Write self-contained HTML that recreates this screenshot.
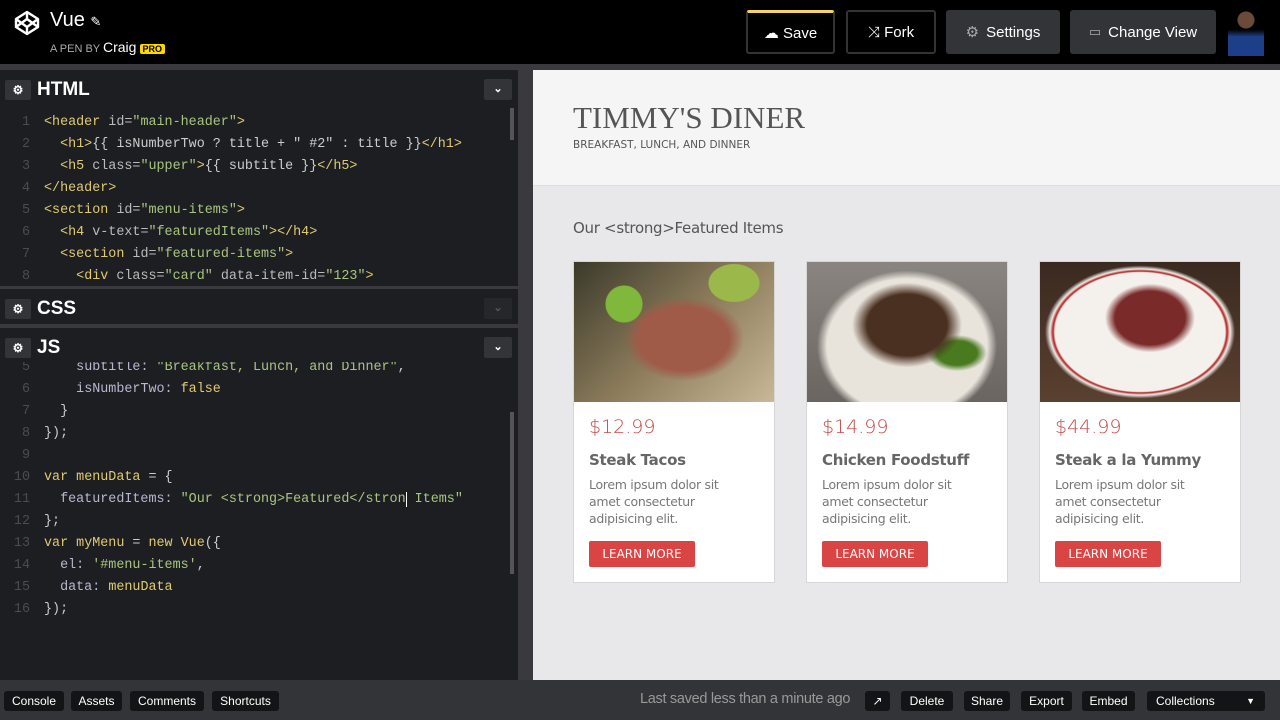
<!DOCTYPE html>
<html><head><meta charset="utf-8"><style>
*{margin:0;padding:0;box-sizing:border-box}
body{width:1280px;height:720px;overflow:hidden;background:#000;font-family:"Liberation Sans",sans-serif;position:relative}
.top{position:absolute;left:0;top:0;width:1280px;height:64px;background:#000}
.strip{position:absolute;left:0;top:64px;width:1280px;height:6px;background:#3a3a3e}
.btn{position:absolute;top:10px;height:44px;border-radius:3px;color:#fff;font-size:15px;display:flex;align-items:center;justify-content:center;gap:7px}
.editor{position:absolute;left:0;top:70px;width:518px;height:610px;background:#1d1e22;overflow:hidden}
.div{position:absolute;left:518px;top:70px;width:15px;height:610px;background:#3a3a3e}
.ph{position:absolute;left:0;width:518px;height:38px;background:#1d1e22;color:#fff;font-weight:bold;font-size:19px}
.ph .g{position:absolute;left:5px;top:10px;width:26px;height:20px;background:#333438;border-radius:2px;color:#fff;font-size:12px;text-align:center;line-height:20px}
.ph .t{position:absolute;left:37px;top:9px}
.ph .c{position:absolute;right:6px;top:9px;width:28px;height:21px;background:#333438;border-radius:2px;color:#fff;font-size:11px;text-align:center;line-height:21px}
.code{position:absolute;left:0;font-family:"Liberation Mono","DejaVu Sans Mono",monospace;font-size:13.4px;color:#ccc}
.code div{height:22px;line-height:22px;white-space:pre}
.ln{display:inline-block;color:#4b4c50;text-align:right;padding-right:14px;width:44px}
.tg{color:#e1ca72}.at{color:#bbb}.st{color:#a8c580}.kw{color:#e1ca72}.pr{color:#b6b8d0}
.bottom{position:absolute;left:0;top:680px;width:1280px;height:40px;background:#333438}
.bb{position:absolute;top:11px;height:20px;background:#131416;color:#fff;font-size:12px;border-radius:3px;line-height:20px;text-align:center}
.prev{position:absolute;left:533px;top:70px;width:747px;height:610px;background:#e8e8ea}
.ph2{position:absolute;left:0;top:0;width:747px;height:116px;background:#f5f5f5;border-bottom:1px solid #ddd}
.card{position:absolute;top:191px;width:202px;height:322px;background:#fff;border:1px solid #d6d6d6;font-family:"DejaVu Sans",sans-serif}
.img{height:140px}
.price{position:absolute;left:15px;top:154px;color:#c24b4b;font-size:19px;font-weight:300}
.nm{position:absolute;left:15px;top:189px;color:#666;font-size:15px;font-weight:bold;letter-spacing:-0.3px}
.ds{position:absolute;left:15px;top:214px;color:#777;font-size:12.5px;line-height:17px;width:160px;letter-spacing:-0.3px}
.lm{position:absolute;left:15px;top:279px;width:106px;height:26px;background:#d94444;color:#fff;font-size:12px;text-align:center;line-height:26px;border-radius:2px}
</style></head><body>
<div class="top">
<svg style="position:absolute;left:14px;top:10px" width="26" height="26" viewBox="0 0 26 26" fill="none" stroke="#fff" stroke-width="2.4" stroke-linejoin="round"><path d="M13 2L24 9V17L13 24L2 17V9Z"/><path d="M13 2V9M13 17V24M2 9L13 17L24 9M2 17L13 9L24 17"/></svg>
<div style="position:absolute;left:50px;top:9px;color:#fff;font-size:20px">Vue <span style="font-size:13px">✎</span></div>
<div style="position:absolute;left:50px;top:39px;color:#aaa;font-size:11px">A PEN BY <span style="color:#fff;font-size:14px">Craig</span> <span style="background:#ffd700;color:#000;font-size:9px;padding:0 3px;border-radius:2px;font-weight:bold">PRO</span></div>
<div class="btn" style="left:746px;width:89px;border:2px solid #333;border-top:3px solid #f4d35e;background:#000">☁ Save</div>
<div class="btn" style="left:846px;width:90px;border:2px solid #333;background:#000">⤨ Fork</div>
<div class="btn" style="left:946px;width:114px;background:#333438"><span style="color:#aaa">⚙</span> Settings</div>
<div class="btn" style="left:1070px;width:146px;background:#333438"><span style="color:#aaa;font-size:13px">▭</span> Change View</div>
<div style="position:absolute;left:1228px;top:8px;width:36px;height:48px;background:radial-gradient(circle at 50% 25%,#6b4a3a 0 8px,transparent 9px),linear-gradient(#000 45%,#1d3f8a 60%);"></div>
</div>
<div class="strip"></div>
<div class="editor">
<div class="ph" style="top:0"><div class="g">⚙</div><div class="t">HTML</div><div class="c">⌄</div></div>
<div class="code" style="top:42px"><div><span class="ln">1</span><span class="tg">&lt;header</span> <span class="at">id=</span><span class="st">"main-header"</span><span class="tg">&gt;</span></div><div><span class="ln">2</span>  <span class="tg">&lt;h1&gt;</span>{{ isNumberTwo ? title + " #2" : title }}<span class="tg">&lt;/h1&gt;</span></div><div><span class="ln">3</span>  <span class="tg">&lt;h5</span> <span class="at">class=</span><span class="st">"upper"</span><span class="tg">&gt;</span>{{ subtitle }}<span class="tg">&lt;/h5&gt;</span></div><div><span class="ln">4</span><span class="tg">&lt;/header&gt;</span></div><div><span class="ln">5</span><span class="tg">&lt;section</span> <span class="at">id=</span><span class="st">"menu-items"</span><span class="tg">&gt;</span></div><div><span class="ln">6</span>  <span class="tg">&lt;h4</span> <span class="at">v-text=</span><span class="st">"featuredItems"</span><span class="tg">&gt;&lt;/h4&gt;</span></div><div><span class="ln">7</span>  <span class="tg">&lt;section</span> <span class="at">id=</span><span class="st">"featured-items"</span><span class="tg">&gt;</span></div><div><span class="ln">8</span>    <span class="tg">&lt;div</span> <span class="at">class=</span><span class="st">"card"</span> <span class="at">data-item-id=</span><span class="st">"123"</span><span class="tg">&gt;</span></div></div>
<div style="position:absolute;left:0;top:216px;width:518px;height:3px;background:#3a3a3e"></div>
<div class="ph" style="top:219px"><div class="g">⚙</div><div class="t">CSS</div><div class="c" style="background:#26272b;color:#555">⌄</div></div>
<div style="position:absolute;left:0;top:254px;width:518px;height:4px;background:#3a3a3e"></div>
<div class="code" style="top:287px"><div><span class="ln">5</span>    <span class="pr">subtitle:</span> <span class="st">"Breakfast, Lunch, and Dinner"</span>,</div><div><span class="ln">6</span>    <span class="pr">isNumberTwo:</span> <span class="kw">false</span></div><div><span class="ln">7</span>  }</div><div><span class="ln">8</span>});</div><div><span class="ln">9</span></div><div><span class="ln">10</span><span class="kw">var</span> <span class="kw">menuData</span> = {</div><div><span class="ln">11</span>  <span class="pr">featuredItems:</span> <span class="st">"Our &lt;strong&gt;Featured&lt;/stron<span style="border-left:1px solid #fff"></span> Items"</span></div><div><span class="ln">12</span>};</div><div><span class="ln">13</span><span class="kw">var</span> <span class="kw">myMenu</span> = <span class="kw">new</span> <span class="kw">Vue</span>({</div><div><span class="ln">14</span>  <span class="pr">el:</span> <span class="st">'#menu-items'</span>,</div><div><span class="ln">15</span>  <span class="pr">data:</span> <span class="kw">menuData</span></div><div><span class="ln">16</span>});</div></div>
<div class="ph" style="top:258px;height:34px"><div class="g">⚙</div><div class="t">JS</div><div class="c">⌄</div></div>
<div style="position:absolute;left:510px;top:342px;width:4px;height:162px;background:#555"></div>
<div style="position:absolute;left:510px;top:38px;width:4px;height:32px;background:#555"></div>
</div>
<div class="div"></div>
<div class="prev">
<div class="ph2">
<div style="position:absolute;left:40px;top:30px;font-family:'Liberation Serif',serif;font-size:31px;color:#555">TIMMY'S DINER</div>
<div style="position:absolute;left:40px;top:69px;font-family:'DejaVu Sans',sans-serif;font-size:10.5px;color:#555">BREAKFAST, LUNCH, AND DINNER</div>
</div>
<div style="position:absolute;left:40px;top:149px;font-family:'DejaVu Sans',sans-serif;font-size:15px;color:#555;letter-spacing:-0.3px">Our &lt;strong&gt;Featured Items</div>
<div class="card" style="left:40px"><div class="img" style="background:radial-gradient(circle at 25% 30%,#7fb83a 0 18px,transparent 19px),radial-gradient(ellipse at 80% 15%,#9bb84a 0 25px,transparent 26px),radial-gradient(ellipse at 55% 55%,#a05a48 0 45px,transparent 60px),linear-gradient(135deg,#3a3a2a,#8a7a5a 50%,#c8b898)"></div>
<div class="price">$12.99</div><div class="nm">Steak Tacos</div><div class="ds">Lorem ipsum dolor sit amet consectetur adipisicing elit.</div><div class="lm">LEARN MORE</div></div>
<div class="card" style="left:273px"><div class="img" style="background:radial-gradient(ellipse at 50% 45%,#4a3020 0 40px,transparent 55px),radial-gradient(ellipse at 75% 65%,#4a7a20 0 20px,transparent 30px),radial-gradient(ellipse at 50% 60%,#e8e4dc 0 80px,transparent 90px),linear-gradient(#8a8580,#6a6560)"></div>
<div class="price">$14.99</div><div class="nm">Chicken Foodstuff</div><div class="ds">Lorem ipsum dolor sit amet consectetur adipisicing elit.</div><div class="lm">LEARN MORE</div></div>
<div class="card" style="left:506px"><div class="img" style="background:radial-gradient(ellipse at 55% 40%,#7a2a28 0 35px,transparent 45px),radial-gradient(ellipse at 50% 50%,#f4f0ec 0 85px,#b02020 87px,#f0ece8 90px,transparent 95px),linear-gradient(#3a2a20,#5a4030)"></div>
<div class="price">$44.99</div><div class="nm">Steak a la Yummy</div><div class="ds">Lorem ipsum dolor sit amet consectetur adipisicing elit.</div><div class="lm">LEARN MORE</div></div>
</div>
<div class="bottom">
<div class="bb" style="left:4px;width:60px">Console</div>
<div class="bb" style="left:71px;width:51px">Assets</div>
<div class="bb" style="left:130px;width:74px">Comments</div>
<div class="bb" style="left:212px;width:67px">Shortcuts</div>
<div style="position:absolute;left:640px;top:11px;color:#999;font-size:14.5px;letter-spacing:-0.3px">Last saved less than a minute ago</div>
<div class="bb" style="left:865px;width:25px">↗</div>
<div class="bb" style="left:901px;width:52px">Delete</div>
<div class="bb" style="left:964px;width:46px">Share</div>
<div class="bb" style="left:1021px;width:51px">Export</div>
<div class="bb" style="left:1082px;width:53px">Embed</div>
<div class="bb" style="left:1147px;width:118px;text-align:left;padding-left:9px">Collections<span style="position:absolute;right:10px;font-size:9px">▼</span></div>
</div>
</body></html>
